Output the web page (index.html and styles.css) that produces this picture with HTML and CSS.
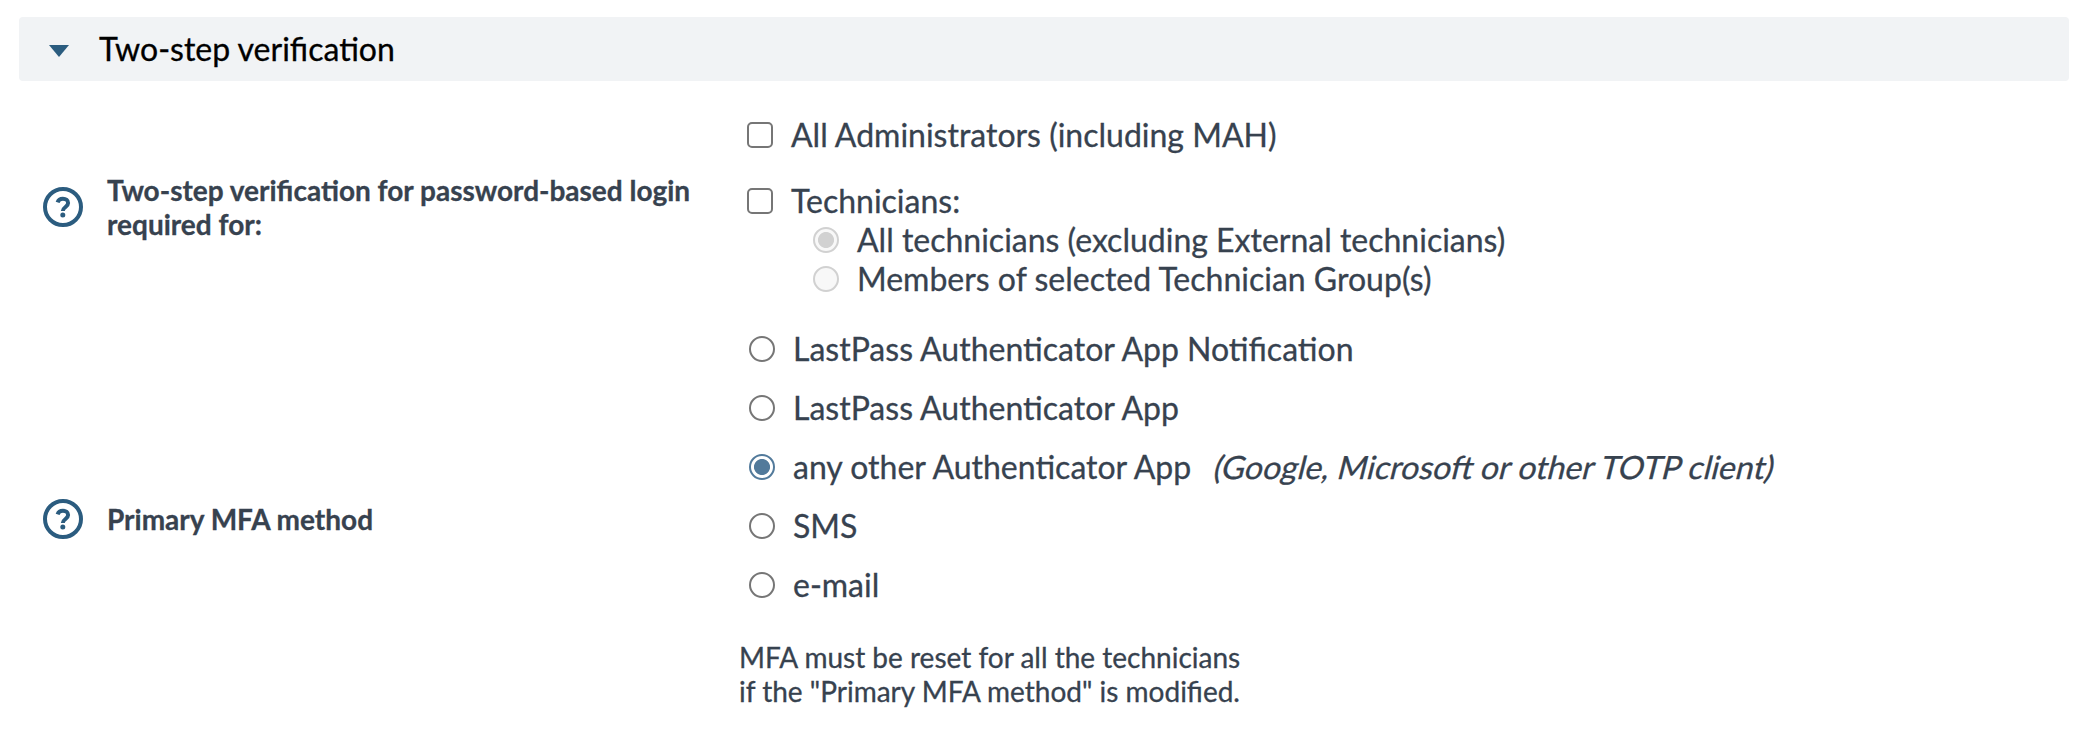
FILE: index.html
```html
<!DOCTYPE html>
<html lang="en">
<head>
  <meta charset="utf-8">
  <title>Two-step verification</title>
  <link rel="stylesheet" href="styles.css">
</head>
<body>
  <div class="section-header">
    <svg class="arrow" viewBox="0 0 20 12"><path d="M0 0h20L10 12z"/></svg>
    <span>Two-step verification</span>
  </div>

  <div class="setting">
    <div class="setting-label">
      <svg class="help" viewBox="0 0 40 40">
        <circle cx="20" cy="20" r="18"/>
        <path d="M14.6 15.4c.8-2.5 2.8-3.7 5.3-3.7 3 0 5.2 1.6 5.2 4.3 0 3.9-5.1 4-5.3 8"/>
        <circle class="dot" cx="19.8" cy="28" r="2.5"/>
      </svg>
      <span>Two-step verification for password-based login required for:</span>
    </div>
    <div class="setting-value">
      <label class="option admins"><input type="checkbox">All Administrators (including MAH)</label>
      <label class="option"><input type="checkbox">Technicians:</label>
      <label class="option sub"><input type="radio" name="scope" checked disabled>All technicians (excluding External technicians)</label>
      <label class="option sub"><input type="radio" name="scope" disabled>Members of selected Technician Group(s)</label>
    </div>
  </div>

  <div class="setting">
    <div class="setting-label">
      <svg class="help" viewBox="0 0 40 40">
        <circle cx="20" cy="20" r="18"/>
        <path d="M14.6 15.4c.8-2.5 2.8-3.7 5.3-3.7 3 0 5.2 1.6 5.2 4.3 0 3.9-5.1 4-5.3 8"/>
        <circle class="dot" cx="19.8" cy="28" r="2.5"/>
      </svg>
      <span>Primary MFA method</span>
    </div>
    <div class="setting-value">
      <div class="methods">
        <label class="option"><input type="radio" name="mfa">LastPass Authenticator App Notification</label>
        <label class="option"><input type="radio" name="mfa">LastPass Authenticator App</label>
        <label class="option"><input type="radio" name="mfa" checked>any other Authenticator App <em>(Google, Microsoft or other TOTP client)</em></label>
        <label class="option"><input type="radio" name="mfa">SMS</label>
        <label class="option"><input type="radio" name="mfa">e-mail</label>
      </div>
      <p class="note">MFA must be reset for all the technicians<br>if the "Primary MFA method" is modified.</p>
    </div>
  </div>
</body>
</html>
```
FILE: styles.css
```css
body { margin: 0; padding: 17px 23px 0 19px; background: #fff; color: #37424f; font-family: Lato, sans-serif; font-size: 32px; line-height: 39px; -webkit-text-stroke: 0.3px; }

.section-header { display: flex; align-items: center; height: 64px; padding-left: 30px; box-sizing: border-box; margin-bottom: 34px; background: #f1f3f5; border-radius: 4px; color: #000; }
.section-header span { margin-bottom: 1px; }
.arrow { width: 20px; height: 12px; margin: 3px 30px 0 0; fill: #2b5c7f; }

.setting { display: grid; grid-template-columns: 721px 1fr; align-items: center; margin-bottom: 31px; }
.setting-label { display: flex; align-items: center; gap: 24px; padding-left: 24px; padding-right: 20px; font-size: 28px; line-height: 34px; font-weight: bold; }

.help { flex: none; width: 40px; height: 40px; fill: none; stroke: #2b5c7f; stroke-width: 4; }
.help .dot { fill: #2b5c7f; stroke: none; }

.option { display: flex; align-items: center; padding-left: 7px; white-space: pre; }
.option.admins { margin-bottom: 27px; }
.option.sub { padding-left: 73px; }
/* slanted regular face, pivots on the baseline */
.option em { margin-left: 13px; font-style: normal; transform: skewX(-14deg); transform-origin: 0 32px; }

.methods { display: flex; flex-direction: column; gap: 20px; }
.methods .option { padding-left: 9px; }

input { appearance: none; flex: none; box-sizing: border-box; width: 26px; height: 26px; margin: 0 18px 0 0; border: 2px solid #767676; background: #fff; }
input[type="checkbox"] { border-radius: 5px; }
input[type="radio"] { border-radius: 50%; }
input[type="radio"]:checked { border-color: #527a9b; background: radial-gradient(circle, #527a9b 7.6px, #fff 8.4px); }
input[type="radio"]:disabled { border-color: #d1d1d1; background: #f8f8f8; }
input[type="radio"]:disabled:checked { background: radial-gradient(circle, #d1d1d1 7.6px, #f8f8f8 8.4px); }

.note { margin: 36px 0 0 -1px; font-size: 28px; line-height: 34px; }
```
